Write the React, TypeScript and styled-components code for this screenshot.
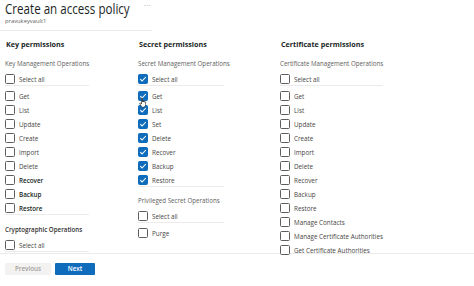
import React from "react";
import styled, { createGlobalStyle } from "styled-components";

const Global = createGlobalStyle`
  html, body { margin: 0; padding: 0; background: #ffffff; }
  body { font-family: "Open Sans", "Noto Sans", Arial, sans-serif; color: #323130; }
  * { box-sizing: border-box; }
`;

const Page = styled.div`
  width: 474px;
  height: 286px;
  position: relative;
  overflow: hidden;
  background: #fff;
`;

const Header = styled.div`
  padding: 1px 0 0 5px;
  height: 30px;
`;

const HeaderRule = styled.div`
  width: 152px;
  height: 1px;
  background: #edebe9;
`;

const TitleRow = styled.div`
  display: flex;
  align-items: center;
  height: 16px;
  white-space: nowrap;
`;

const Title = styled.h1`
  margin: 0;
  font-size: 14.5px;
  font-weight: 400;
  line-height: 16px;
  color: #201f1e;
  transform: scaleX(0.8);
  transform-origin: left center;
  width: 125px;
`;

const More = styled.span`
  margin-left: 14px;
  font-size: 7px;
  color: #8a8886;
  line-height: 10px;
  position: relative;
  top: -3px;
  letter-spacing: 0.5px;
`;

const Subtitle = styled.div`
  margin-top: 1px;
  font-size: 5.8px;
  line-height: 7px;
  color: #605e5c;
  white-space: nowrap;
`;

const Columns = styled.div`
  display: grid;
  grid-template-columns: 133px 142px 1fr;
  padding-left: 5px;
  height: 223px;
  border-bottom: 1px solid #edebe9;
`;

const Column = styled.div`
  display: flex;
  flex-direction: column;
`;

const Heading = styled.h2`
  margin: 8px 0 0 1px;
  font-size: 7.2px;
  font-weight: 700;
  line-height: 10px;
  color: #201f1e;
`;

const GroupLabel = styled.div<{ $top: number; $dark?: boolean }>`
  margin-top: ${(p) => p.$top}px;
  margin-bottom: 3px;
  font-size: 6.2px;
  line-height: 10px;
  height: 10px;
  white-space: nowrap;
  color: ${(p) => (p.$dark ? "#323130" : "#605e5c")};
  font-weight: ${(p) => (p.$dark ? 600 : 400)};
`;

const Group = styled.div<{ $width: number }>`
  width: ${(p) => p.$width}px;
  display: flex;
  flex-direction: column;
`;

const Row = styled.label<{ $strong?: boolean }>`
  display: flex;
  align-items: center;
  gap: 4px;
  height: 14px;
  font-size: 6.3px;
  color: ${(p) => (p.$strong ? "#201f1e" : "#484644")};
  font-weight: ${(p) => (p.$strong ? 600 : 400)};
  white-space: nowrap;
`;

const Separator = styled.div<{ $after?: number }>`
  height: 1px;
  background: #edebe9;
  margin-top: -1px;
  margin-bottom: ${(p) => p.$after ?? 3}px;
`;

const Box = styled.span<{ $checked?: boolean }>`
  width: 10px;
  height: 10px;
  flex: 0 0 10px;
  border-radius: 1.5px;
  border: 1px solid ${(p) => (p.$checked ? "#0f6cbd" : "#605e5c")};
  background: ${(p) => (p.$checked ? "#0f6cbd" : "#fff")};
  display: flex;
  align-items: center;
  justify-content: center;
`;

const Footer = styled.div`
  display: flex;
  gap: 4px;
  padding: 9px 0 0 5px;
`;

const Button = styled.button<{ $primary?: boolean }>`
  height: 12px;
  width: ${(p) => (p.$primary ? 40 : 46)}px;
  padding: 0;
  border: none;
  border-radius: 1px;
  font-family: inherit;
  font-size: 6.3px;
  font-weight: 600;
  line-height: 12px;
  background: ${(p) => (p.$primary ? "#0f6cbd" : "#f3f2f1")};
  color: ${(p) => (p.$primary ? "#ffffff" : "#a19f9d")};
`;

const Cursor = styled.svg`
  position: absolute;
  left: 139px;
  top: 97px;
  width: 9px;
  height: 12px;
`;

const Check = () => (
  <svg width="8" height="8" viewBox="0 0 8 8">
    <path d="M1.3 4.2 L3.1 6 L6.8 2" fill="none" stroke="#fff" strokeWidth="1.1" />
  </svg>
);

type Item = { label: string; strong?: boolean };

const CheckRow: React.FC<{ label: string; checked?: boolean; strong?: boolean }> = ({
  label,
  checked,
  strong,
}) => (
  <Row $strong={strong}>
    <Box $checked={checked}>{checked && <Check />}</Box>
    <span>{label}</span>
  </Row>
);

const PermissionGroup: React.FC<{
  width: number;
  items: Item[];
  checked?: boolean;
  endSeparator?: boolean;
}> = ({ width, items, checked, endSeparator }) => (
  <Group $width={width}>
    <CheckRow label="Select all" checked={checked} />
    <Separator $after={items.length ? 3 : 0} />
    {items.map((it) => (
      <CheckRow key={it.label} label={it.label} checked={checked} strong={it.strong} />
    ))}
    {endSeparator && <Separator $after={0} />}
  </Group>
);

const keyItems: Item[] = [
  { label: "Get" },
  { label: "List" },
  { label: "Update" },
  { label: "Create" },
  { label: "Import" },
  { label: "Delete" },
  { label: "Recover", strong: true },
  { label: "Backup", strong: true },
  { label: "Restore", strong: true },
];

const secretItems: Item[] = ["Get", "List", "Set", "Delete", "Recover", "Backup", "Restore"].map(
  (label) => ({ label })
);

const certItems: Item[] = [
  "Get",
  "List",
  "Update",
  "Create",
  "Import",
  "Delete",
  "Recover",
  "Backup",
  "Restore",
  "Manage Contacts",
  "Manage Certificate Authorities",
  "Get Certificate Authorities",
].map((label) => ({ label }));

export default function App() {
  return (
    <Page>
      <Global />
      <Header>
        <TitleRow>
          <Title>Create an access policy</Title>
          <More>···</More>
        </TitleRow>
        <Subtitle>pravukeyvault1</Subtitle>
      </Header>
      <HeaderRule />
      <Columns>
        <Column>
          <Heading>Key permissions</Heading>
          <GroupLabel $top={10}>Key Management Operations</GroupLabel>
          <PermissionGroup width={84} items={keyItems} endSeparator />
          <GroupLabel $top={10} $dark>
            Cryptographic Operations
          </GroupLabel>
          <PermissionGroup width={84} items={[]} />
        </Column>
        <Column>
          <Heading>Secret permissions</Heading>
          <GroupLabel $top={10}>Secret Management Operations</GroupLabel>
          <PermissionGroup width={86} items={secretItems} checked endSeparator />
          <GroupLabel $top={9}>Privileged Secret Operations</GroupLabel>
          <PermissionGroup width={86} items={[{ label: "Purge" }]} />
        </Column>
        <Column>
          <Heading>Certificate permissions</Heading>
          <GroupLabel $top={10}>Certificate Management Operations</GroupLabel>
          <PermissionGroup width={103} items={certItems} />
        </Column>
      </Columns>
      <Footer>
        <Button>Previous</Button>
        <Button $primary>Next</Button>
      </Footer>
      <Cursor viewBox="0 0 18 24">
        <path
          d="M5 2.5c0-1 1.8-1 1.8 0V10l.4-.1V8c0-1 1.8-1 1.8 0v1.9l.3-.1V9c0-1 1.8-1 1.8 0v1.3l.3-.1c0-1 1.7-1 1.7 0v5c0 3-1.8 5.5-4.5 5.5H8c-1.8 0-2.8-1-3.6-2.3L1.5 13c-.6-1 .8-2 1.7-1L5 14V2.5z"
          fill="#fff"
          stroke="#000"
          strokeWidth="1.1"
        />
      </Cursor>
    </Page>
  );
}
